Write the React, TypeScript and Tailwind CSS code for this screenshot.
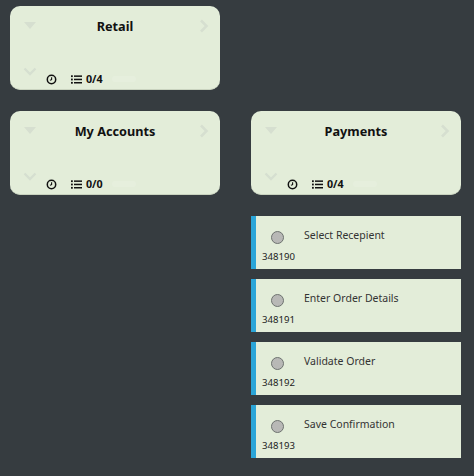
import React from 'react';

const ClockIcon = () => (
    <svg width="11" height="11" viewBox="0 0 11 11" fill="none" className="shrink-0">
        <circle cx="5.5" cy="5.5" r="4.2" stroke="#111" strokeWidth="1.5" />
        <path d="M5.6 3.2V5.7L3.9 6.2" stroke="#111" strokeWidth="1.1" />
    </svg>
);

const ListIcon = () => (
    <svg width="11" height="9" viewBox="0 0 11 9" className="shrink-0" fill="#111">
        <rect x="0" y="0.3" width="1.8" height="1.8" />
        <rect x="0" y="3.6" width="1.8" height="1.8" />
        <rect x="0" y="6.9" width="1.8" height="1.8" />
        <rect x="3" y="0.4" width="8" height="1.5" />
        <rect x="3" y="3.7" width="8" height="1.5" />
        <rect x="3" y="7" width="8" height="1.5" />
    </svg>
);

const Card = ({ title, count }: { title: string; count: string }) => (
    <div className="w-[210px] h-[84px] bg-[#e3edd9] rounded-[10px] border-b border-[#c9d3bf] flex flex-col px-[13px] pt-[12px] pb-[3px]">
        <div className="grid grid-cols-[1fr_auto_1fr] items-start -mr-[2px] pr-[2px]">
            <svg width="14" height="10" viewBox="0 0 14 10" className="mt-[3px]">
                <path d="M1 1H13L7 8Z" fill="#d6dfd0" />
            </svg>
            <h3 className="text-[12.7px] leading-[16px] font-bold text-[#111]">{title}</h3>
            <svg width="10" height="14" viewBox="0 0 10 14" fill="none" className="mt-[1px] justify-self-end -mr-[2px]">
                <path d="M2 1.5L7.5 7L2 12.5" stroke="#d6dfd0" strokeWidth="2.6" />
            </svg>
        </div>
        <div className="mt-auto flex items-center h-[14px]">
            <svg width="14" height="9" viewBox="0 0 14 9" fill="none" className="-mt-[16px]">
                <path d="M1.5 1.5L7 7L12.5 1.5" stroke="#d6dfd0" strokeWidth="2.4" />
            </svg>
            <span className="ml-[9px] flex"><ClockIcon /></span>
            <span className="ml-[14px] flex"><ListIcon /></span>
            <span className="ml-[4px] text-[10.7px] leading-[14px] font-bold text-[#111]">{count}</span>
            <span className="ml-[9px] w-[24px] h-[6px] rounded-sm bg-[#e6efdd]"></span>
        </div>
    </div>
);

const Task = ({ name, id }: { name: string; id: string }) => (
    <div className="w-[210px] h-[53px] bg-[#e3edd9] border-l-[5px] border-[#2aa5d8] flex">
        <div className="w-[48px] shrink-0 flex flex-col items-start pt-[15px] pl-[6px]">
            <span className="ml-[9px] w-[13px] h-[13px] rounded-full bg-[#b8b8b6] border border-[#6e7370]"></span>
            <span className="mt-[6px] text-[9.6px] leading-[14px] text-[#222]">{id}</span>
        </div>
        <div className="pt-[12px] text-[10.5px] leading-[15px] text-[#333]">{name}</div>
    </div>
);

export default function App() {
    const tasks = [
        { name: 'Select Recepient', id: '348190' },
        { name: 'Enter Order Details', id: '348191' },
        { name: 'Validate Order', id: '348192' },
        { name: 'Save Confirmation', id: '348193' },
    ];

    return (
        <div className="w-[474px] h-[476px] overflow-hidden bg-[#363c40] pl-[10px] pt-[6px] font-['Noto_Sans','Open_Sans',sans-serif]">
            <Card title="Retail" count="0/4" />
            <div className="mt-[21px] flex gap-[31px] items-start">
                <Card title="My Accounts" count="0/0" />
                <div className="flex flex-col">
                    <Card title="Payments" count="0/4" />
                    <div className="mt-[21px] flex flex-col gap-[10px]">
                        {tasks.map((t) => (
                            <Task key={t.id} name={t.name} id={t.id} />
                        ))}
                    </div>
                </div>
            </div>
        </div>
    );
}
